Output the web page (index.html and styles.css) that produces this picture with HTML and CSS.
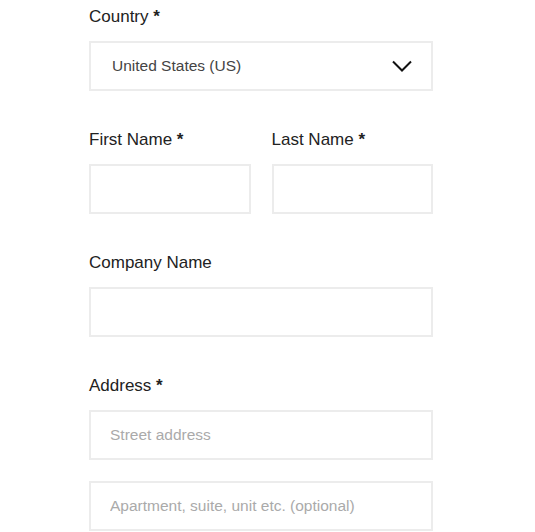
FILE: index.html
```html
<!DOCTYPE html>
<html lang="en">
<head>
  <meta charset="UTF-8" />
  <title>Billing details</title>
  <link rel="stylesheet" href="styles.css">
</head>
<body>
  <form class="billing">
    <div class="field">
      <label>Country <span class="req">*</span></label>
      <div class="select">
        <span>United States (US)</span>
        <svg class="chevron" width="20" height="12" viewBox="0 0 20 12"><path d="M1 1.5 L10 10.5 L19 1.5" fill="none" stroke="#111" stroke-width="2"/></svg>
      </div>
    </div>

    <div class="row">
      <div class="field">
        <label>First Name <span class="req">*</span></label>
        <input type="text" />
      </div>
      <div class="field">
        <label>Last Name <span class="req">*</span></label>
        <input type="text" />
      </div>
    </div>

    <div class="field">
      <label>Company Name</label>
      <input type="text" />
    </div>

    <div class="field">
      <label>Address <span class="req">*</span></label>
      <input type="text" placeholder="Street address" />
      <input type="text" class="second" placeholder="Apartment, suite, unit etc. (optional)" />
    </div>
  </form>
</body>
</html>
```

FILE: styles.css
```css
* { box-sizing: border-box; }
body {
  margin: 0;
  background: #fff;
  font-family: 'Liberation Sans', Arial, sans-serif;
  color: #222;
}
.billing {
  width: 344px;
  margin-left: 89px;
  padding-top: 5px;
}
.field {
  margin-bottom: 37px;
}
.field label {
  display: block;
  font-size: 17px;
  line-height: 24px;
  margin-bottom: 12px;
  color: #222;
}
.req {
  font-weight: bold;
}
.row {
  display: flex;
  gap: 21px;
}
.row .field {
  flex: 1;
}
.field input,
.select {
  display: block;
  width: 100%;
  height: 50px;
  border: 2px solid #ececec;
  background: #fff;
  padding: 0 19px;
  font-family: inherit;
  font-size: 15.5px;
  color: #444;
  outline: none;
}
.field input::placeholder {
  color: #aaa;
}
.field input.second {
  margin-top: 21px;
}
.select {
  display: flex;
  align-items: center;
  justify-content: space-between;
  padding-left: 21px;
  padding-right: 19px;
  font-size: 15.5px;
}
.chevron {
  display: block;
}
```
